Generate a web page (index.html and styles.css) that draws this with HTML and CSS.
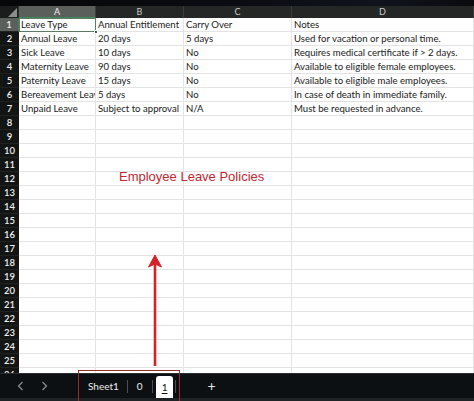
FILE: index.html
```html
<!DOCTYPE html>
<html>
<head>
<meta charset="utf-8">
<link rel="stylesheet" href="styles.css">
</head>
<body>
<div class="app">
  <div class="topstrip"></div>
  <div class="sheet">
    <div class="grid">
      <div class="corner"><svg width="9" height="9" viewBox="0 0 9 9"><polygon points="9,0 9,9 0,9" fill="#8a8d8c"/></svg></div>
      <div class="colhead sel">A</div>
      <div class="colhead">B</div>
      <div class="colhead">C</div>
      <div class="colhead">D</div>

      <div class="rowhead sel">1</div>
      <div class="cell active">Leave Type<span class="handle"></span></div>
      <div class="cell">Annual Entitlement</div>
      <div class="cell">Carry Over</div>
      <div class="cell">Notes</div>

      <div class="rowhead">2</div>
      <div class="cell">Annual Leave</div>
      <div class="cell">20 days</div>
      <div class="cell">5 days</div>
      <div class="cell">Used for vacation or personal time.</div>

      <div class="rowhead">3</div>
      <div class="cell">Sick Leave</div>
      <div class="cell">10 days</div>
      <div class="cell">No</div>
      <div class="cell">Requires medical certificate if &gt; 2 days.</div>

      <div class="rowhead">4</div>
      <div class="cell">Maternity Leave</div>
      <div class="cell">90 days</div>
      <div class="cell">No</div>
      <div class="cell">Available to eligible female employees.</div>

      <div class="rowhead">5</div>
      <div class="cell">Paternity Leave</div>
      <div class="cell">15 days</div>
      <div class="cell">No</div>
      <div class="cell">Available to eligible male employees.</div>

      <div class="rowhead">6</div>
      <div class="cell">Bereavement Leave</div>
      <div class="cell">5 days</div>
      <div class="cell">No</div>
      <div class="cell">In case of death in immediate family.</div>

      <div class="rowhead">7</div>
      <div class="cell">Unpaid Leave</div>
      <div class="cell">Subject to approval</div>
      <div class="cell">N/A</div>
      <div class="cell">Must be requested in advance.</div>

      <div class="rowhead">8</div><div class="cell"></div><div class="cell"></div><div class="cell"></div><div class="cell"></div>
      <div class="rowhead">9</div><div class="cell"></div><div class="cell"></div><div class="cell"></div><div class="cell"></div>
      <div class="rowhead">10</div><div class="cell"></div><div class="cell"></div><div class="cell"></div><div class="cell"></div>
      <div class="rowhead">11</div><div class="cell"></div><div class="cell"></div><div class="cell"></div><div class="cell"></div>
      <div class="rowhead">12</div><div class="cell"></div><div class="cell"></div><div class="cell"></div><div class="cell"></div>
      <div class="rowhead">13</div><div class="cell"></div><div class="cell"></div><div class="cell"></div><div class="cell"></div>
      <div class="rowhead">14</div><div class="cell"></div><div class="cell"></div><div class="cell"></div><div class="cell"></div>
      <div class="rowhead">15</div><div class="cell"></div><div class="cell"></div><div class="cell"></div><div class="cell"></div>
      <div class="rowhead">16</div><div class="cell"></div><div class="cell"></div><div class="cell"></div><div class="cell"></div>
      <div class="rowhead">17</div><div class="cell"></div><div class="cell"></div><div class="cell"></div><div class="cell"></div>
      <div class="rowhead">18</div><div class="cell"></div><div class="cell"></div><div class="cell"></div><div class="cell"></div>
      <div class="rowhead">19</div><div class="cell"></div><div class="cell"></div><div class="cell"></div><div class="cell"></div>
      <div class="rowhead">20</div><div class="cell"></div><div class="cell"></div><div class="cell"></div><div class="cell"></div>
      <div class="rowhead">21</div><div class="cell"></div><div class="cell"></div><div class="cell"></div><div class="cell"></div>
      <div class="rowhead">22</div><div class="cell"></div><div class="cell"></div><div class="cell"></div><div class="cell"></div>
      <div class="rowhead">23</div><div class="cell"></div><div class="cell"></div><div class="cell"></div><div class="cell"></div>
      <div class="rowhead">24</div><div class="cell"></div><div class="cell"></div><div class="cell"></div><div class="cell"></div>
      <div class="rowhead">25</div><div class="cell"></div><div class="cell"></div><div class="cell"></div><div class="cell"></div>
      <div class="rowhead">26</div><div class="cell"></div><div class="cell"></div><div class="cell"></div><div class="cell"></div>
    </div>
    <div class="annot">Employee Leave Policies</div>
    <svg class="arrow" width="20" height="116" viewBox="0 0 20 116">
      <line x1="10" y1="10" x2="10" y2="113" stroke="#d3232a" stroke-width="2.6"/>
      <polygon points="10,2 16.5,14 10,11 3.5,14" fill="#d3232a" stroke="#d3232a" stroke-width="1" stroke-linejoin="round"/>
    </svg>
  </div>
  <div class="tabbar">
    <div class="nav">
      <svg class="navicon" width="8" height="10" viewBox="0 0 8 10"><polyline points="5.5,1 1.5,5 5.5,9" fill="none" stroke="#8d9194" stroke-width="1.2"/></svg>
      <svg class="navicon" width="8" height="10" viewBox="0 0 8 10"><polyline points="2.5,1 6.5,5 2.5,9" fill="none" stroke="#8d9194" stroke-width="1.2"/></svg>
    </div>
    <div class="tabs">
      <div class="tab first">Sheet1</div>
      <div class="sep"></div>
      <div class="tab zero">0</div>
      <div class="sep"></div>
      <div class="tab active"><span class="ul">1</span></div>
      <div class="sep"></div>
    </div>
    <div class="plus">+</div>
  </div>
  <div class="bottomstrip"></div>
  <div class="redbox"></div>
</div>
</body>
</html>
```
FILE: styles.css
```css
* { box-sizing: border-box; }
html, body { margin: 0; padding: 0; background: #0b0e10; }
body { width: 474px; height: 401px; overflow: hidden; font-family: "Lato", "Open Sans", sans-serif; }

.app { position: relative; width: 474px; height: 401px; display: flex; flex-direction: column; }

.topstrip { height: 6px; background: linear-gradient(90deg, #060708 0%, #0b0c12 50%, #10131c 80%, #0a0b0e 100%); }

.sheet { position: relative; height: 367px; overflow: hidden; background: #fff; }

.grid {
  display: grid;
  grid-template-columns: 19px 77px 88px 108px 182px;
  grid-template-rows: 12px repeat(26, 14px);
}

.corner { background: #1b1d1d; display: flex; align-items: flex-end; justify-content: flex-end; padding: 0 1px 1px 0; border-right: 1px solid #2c2f2f; }

.colhead {
  background: #242726;
  color: #c9cccb;
  font-size: 9px;
  line-height: 12px;
  text-align: center;
  border-right: 1px solid #3a3d3c;
}
.colhead.sel { background: #5b5f5c; color: #f2f2f2; border-bottom: 1px solid #3e8a5a; }

.rowhead {
  background: #131414;
  color: #f0f0f0;
  font-size: 9.5px;
  font-weight: 600;
  line-height: 14px;
  text-align: center;
  border-bottom: 1px solid #202222;
}
.rowhead.sel { background: #5b5f5c; border-right: 1px solid #3e8a5a; }

.cell {
  position: relative;
  border-right: 1px solid #e3e3e3;
  border-bottom: 1px solid #e3e3e3;
  font-size: 9.6px;
  line-height: 13px;
  color: #1a1a1a;
  padding-left: 2px;
  white-space: nowrap;
  overflow: hidden;
}
.cell.active { border: 1px solid #5a7a66; overflow: visible; padding-left: 1px; line-height: 12px; }
.handle { position: absolute; right: -3px; bottom: -3px; width: 4px; height: 4px; background: #2f6b45; border: 1px solid #fff; z-index: 2; }

.annot {
  position: absolute;
  left: 119px;
  top: 163px;
  font-family: "Liberation Sans", Arial, sans-serif;
  font-size: 13px;
  color: #c2272f;
  white-space: nowrap;
}

.arrow { position: absolute; left: 145px; top: 247px; }

.tabbar {
  height: 25px;
  background: #0c1012;
  border-top: 1px solid #2a2d2f;
  display: flex;
  align-items: center;
}
.nav { display: flex; gap: 15px; padding-left: 17px; width: 84px; }
.navicon { display: block; }
.tabs { display: flex; align-items: center; height: 100%; }
.tab { color: #eceeef; font-size: 10px; line-height: 22px; }
.tab.first { padding: 0 8px 0 4px; }
.tab.zero { padding: 0 9px; }
.sep { width: 1px; height: 13px; background: #4b4f52; }
.tab.active {
  background: #fff;
  color: #111;
  border-radius: 3px 3px 0 0;
  height: 22px;
  align-self: flex-end;
  margin: 0 2px 0 3px;
  padding: 0 6px;
}
.ul { text-decoration: underline; text-underline-offset: 2px; }
.plus { color: #e6e6e6; font-size: 14px; margin-left: 31px; line-height: 1; }

.bottomstrip { height: 3px; background: #1f2325; }

.redbox {
  position: absolute;
  left: 78px;
  top: 370px;
  width: 102px;
  height: 34px;
  border: 1.5px solid #9c2a2d;
}
```
